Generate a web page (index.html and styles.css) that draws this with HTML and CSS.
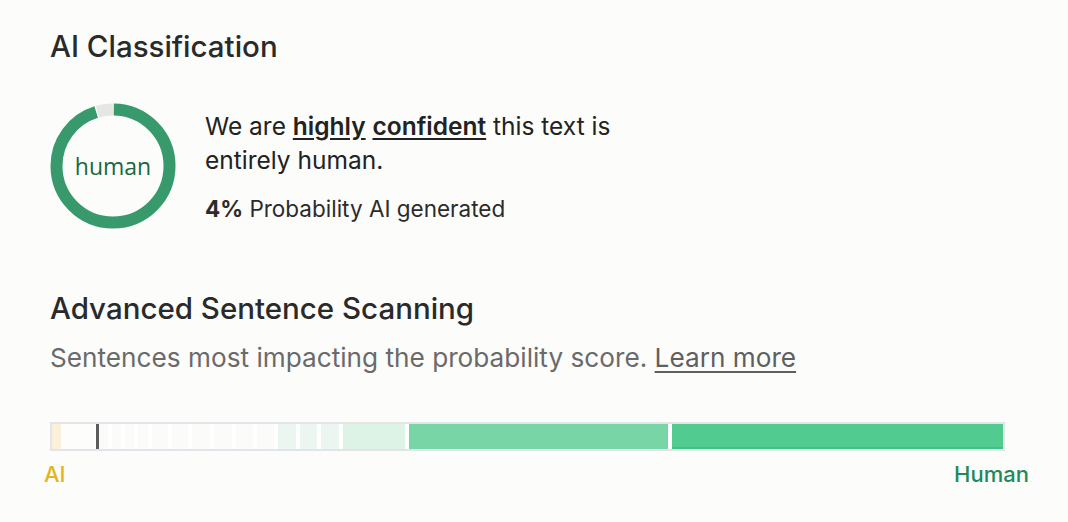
FILE: index.html
```html
<!DOCTYPE html>
<html lang="en">
<head>
  <meta charset="UTF-8">
  <meta name="viewport" content="width=device-width, initial-scale=1.0">
  <title>AI Classification</title>
  <link rel="stylesheet" href="styles.css">
</head>
<body>
  <div class="report">
    <h2 class="section-title">AI Classification</h2>

    <div class="summary">
      <div class="donut">
        <svg width="126" height="126" viewBox="0 0 126 126">
          <!-- 96% human arc, 4% AI arc, both starting at 12 o'clock -->
          <circle class="arc arc-human" cx="63" cy="63" r="56.5"
                  stroke-dasharray="336.5 400" stroke-dashoffset="-0.8"/>
          <circle class="arc arc-ai" cx="63" cy="63" r="56.5"
                  stroke-dasharray="15.8 400" stroke-dashoffset="-338.6"/>
        </svg>
        <span class="donut-label">human</span>
      </div>

      <div class="verdict">
        <p class="verdict-text">We are <u>highly</u> <u>confident</u> this text is entirely human.</p>
        <p class="verdict-prob"><b>4%</b> Probability AI generated</p>
      </div>
    </div>

    <h2 class="section-title">Advanced Sentence Scanning</h2>
    <p class="section-sub">Sentences most impacting the probability score. <a href="#">Learn more</a></p>

    <div class="scan-bar">
      <div class="seg seg-ai" style="width:9px"></div>
      <div class="seg seg-blank" style="width:34px"></div>
      <div class="seg seg-marker" style="width:3px"></div>
      <div class="seg seg-faint" style="width:9px"></div>
      <div class="seg seg-faint gap" style="width:9px"></div>
      <div class="seg seg-faint gap" style="width:9px"></div>
      <div class="seg seg-faint gap" style="width:10px"></div>
      <div class="seg seg-faint gap" style="width:16px"></div>
      <div class="seg seg-faint gap" style="width:16px"></div>
      <div class="seg seg-faint gap" style="width:18px"></div>
      <div class="seg seg-faint gap" style="width:18px"></div>
      <div class="seg seg-faint gap" style="width:17px"></div>
      <div class="seg seg-faint gap" style="width:17px"></div>
      <div class="seg seg-low gap" style="width:18px"></div>
      <div class="seg seg-low gap" style="width:17px"></div>
      <div class="seg seg-low gap" style="width:18px"></div>
      <div class="seg seg-mid gap" style="width:62px"></div>
      <div class="seg seg-high gap" style="width:259px"></div>
      <div class="seg seg-top gap" style="width:331px"></div>
    </div>
    <div class="scan-labels">
      <span class="label-ai">AI</span>
      <span class="label-human">Human</span>
    </div>
  </div>
</body>
</html>
```

FILE: styles.css
```css
body {
  margin: 0;
  background-color: #fcfcfb;
  font-family: Inter, "Noto Sans", sans-serif;
  color: #2b2b2b;
}

.report {
  padding: 28px 50px 0 50px;
  width: 980px;
}

.section-title {
  margin: 0;
  font-size: 29.5px;
  font-weight: 500;
  line-height: 36px;
  color: #2a2a2a;
}

.summary {
  display: flex;
  align-items: center;
  gap: 29px;
  margin: 39px 0 61px 0;
}

.donut {
  position: relative;
  width: 126px;
  height: 126px;
}

.donut svg {
  display: block;
  transform: rotate(-90deg);
}

.arc {
  fill: none;
  stroke-width: 12;
}

.arc-human {
  stroke: #389a6c;
}

.arc-ai {
  stroke: #e6e6e6;
}

.donut-label {
  position: absolute;
  inset: 0;
  display: flex;
  align-items: center;
  justify-content: center;
  font-family: "Open Sans", sans-serif;
  font-size: 23px;
  color: #17693f;
}

.verdict {
  max-width: 430px;
}

.verdict p {
  margin: 0;
}

.verdict-text {
  font-size: 24.5px;
  line-height: 34px;
  color: #222;
}

.verdict-text u {
  font-weight: 600;
  text-underline-offset: 3px;
}

.verdict-prob {
  margin-top: 18px !important;
  font-size: 22.5px;
  line-height: 28px;
  color: #2b2b2b;
}

.verdict-prob b {
  font-weight: 700;
}

.section-sub {
  margin: 16px 0 0 0;
  font-size: 26.2px;
  line-height: 32px;
  color: #6a6a6a;
}

.section-sub a {
  color: #5f5f5f;
  text-underline-offset: 4px;
}

.scan-bar {
  display: flex;
  margin-top: 48px;
  width: 951px;
  height: 25px;
  border: 2px solid #e3e4ea;
  background-color: #fff;
}

.seg {
  height: 100%;
}

.seg.gap {
  margin-left: 4px;
}

.seg-ai { background-color: #fdf0da; }
.seg-blank { background-color: #fdfdfc; }
.seg-marker {
  background-color: #5c5c5c;
  border-left: 1px solid #fff;
}
.seg-faint { background-color: #fbfbf9; }
.seg-low { background-color: #eaf6ef; }
.seg-mid { background-color: #ddf3e6; }
.seg-high { background-color: #78d5a6; }
.seg-top {
  background-color: #51cb90;
  box-shadow: inset 0 -2px 0 #40c285;
}

.scan-labels {
  display: flex;
  justify-content: space-between;
  width: 985px;
  margin: 10px 0 0 -6px;
  font-size: 22px;
  line-height: 26px;
  font-weight: 500;
}

.label-ai {
  color: #e3b521;
}

.label-human {
  color: #1f8a58;
}
```
